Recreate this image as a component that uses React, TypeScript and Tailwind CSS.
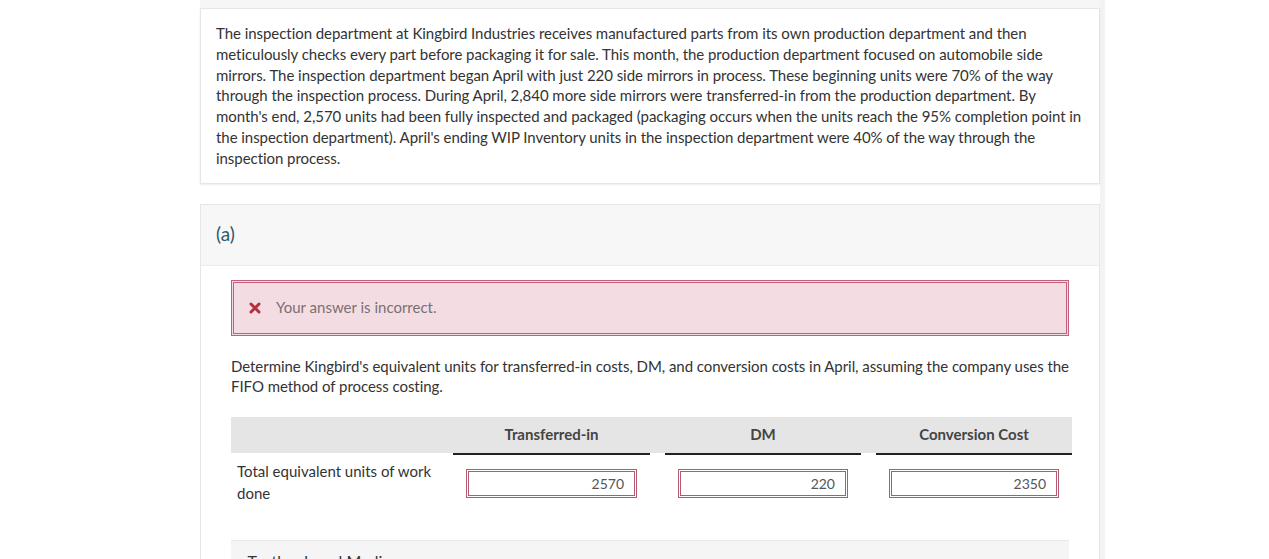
import { X } from "lucide-react";

const intro =
  "The inspection department at Kingbird Industries receives manufactured parts from its own production department and then meticulously checks every part before packaging it for sale. This month, the production department focused on automobile side mirrors. The inspection department began April with just 220 side mirrors in process. These beginning units were 70% of the way through the inspection process. During April, 2,840 more side mirrors were transferred-in from the production department. By month's end, 2,570 units had been fully inspected and packaged (packaging occurs when the units reach the 95% completion point in the inspection department). April's ending WIP Inventory units in the inspection department were 40% of the way through the inspection process.";

function AnswerInput({ value }: { value: string }) {
  return (
    <div className="h-[29px] border-[3px] border-double border-[#b35a70] bg-white flex items-center justify-end px-[10px] text-[14px] text-[#555]">
      {value}
    </div>
  );
}

export default function App() {
  return (
    <div
      className="min-h-[559px] bg-white text-[#333] overflow-hidden"
      style={{ fontFamily: "Lato, 'Liberation Sans', sans-serif" }}
    >
      <div className="w-[905px] ml-[200px] border-r-[5px] border-[#f3f3f3] min-h-[559px]">
        <div className="h-[8px] bg-[#f6f6f6]" />
        <div className="flex flex-col">
          {/* Problem statement */}
          <div className="border border-[#e6e6e6] shadow-[0_1px_2px_rgba(0,0,0,0.08)] bg-white pl-[15px] pr-[10px] pt-[14px] pb-[14px]">
            <p className="text-[15px] leading-[20.8px] tracking-[-0.05px]">{intro}</p>
          </div>

          {/* Part (a) */}
          <div className="mt-[20px] border border-[#e6e6e6] bg-white">
            <div className="h-[61px] bg-[#f7f7f7] border-b border-[#ececec] flex items-center px-[15px]">
              <span className="text-[19px] text-[#2c5a6b]">(a)</span>
            </div>

            <div className="px-[30px] pt-[14px]">
              <div className="h-[56px] border-[3px] border-double border-[#c0607a] bg-[#f3dde3] flex items-center pl-[13px] gap-[13px]">
                <X size={16} strokeWidth={4.5} className="text-[#b5303f]" />
                <span className="text-[15px] text-[#7b6f73]">Your answer is incorrect.</span>
              </div>

              <p className="mt-[20px] text-[15px] leading-[20px] tracking-[-0.05px]">
                Determine Kingbird's equivalent units for transferred-in costs, DM, and conversion costs in April, assuming the company uses the FIFO method of process costing.
              </p>

              <div className="mt-[21px] grid grid-cols-[222px_197px_15px_196px_15px_196px]">
                <div className="h-[36px] bg-[#e5e5e5]" />
                <div className="h-[36px] bg-[#e5e5e5] flex items-center justify-center text-[15px] font-bold text-[#444] border-b-2 border-[#222] box-content">
                  Transferred-in
                </div>
                <div className="h-[36px] bg-[#e5e5e5]" />
                <div className="h-[36px] bg-[#e5e5e5] flex items-center justify-center text-[15px] font-bold text-[#444] border-b-2 border-[#222] box-content">
                  DM
                </div>
                <div className="h-[36px] bg-[#e5e5e5]" />
                <div className="h-[36px] bg-[#e5e5e5] flex items-center justify-center text-[15px] font-bold text-[#444] border-b-2 border-[#222] box-content">
                  Conversion Cost
                </div>

                <div className="pl-[6px] pt-[5px] text-[15px] leading-[22px] pr-[12px]">
                  Total equivalent units of work done
                </div>
                <div className="px-[13px] pt-[14px]">
                  <AnswerInput value="2570" />
                </div>
                <div />
                <div className="px-[13px] pt-[14px]">
                  <AnswerInput value="220" />
                </div>
                <div />
                <div className="px-[13px] pt-[14px]">
                  <AnswerInput value="2350" />
                </div>
              </div>

              <div className="mt-[36px] bg-[#f5f5f5] border-t border-[#e8e8e8] px-[10px] pt-[8px] pb-[20px]">
                <span className="text-[16px] text-[#333]">eTextbook and Media</span>
              </div>
            </div>
          </div>
        </div>
      </div>
    </div>
  );
}
